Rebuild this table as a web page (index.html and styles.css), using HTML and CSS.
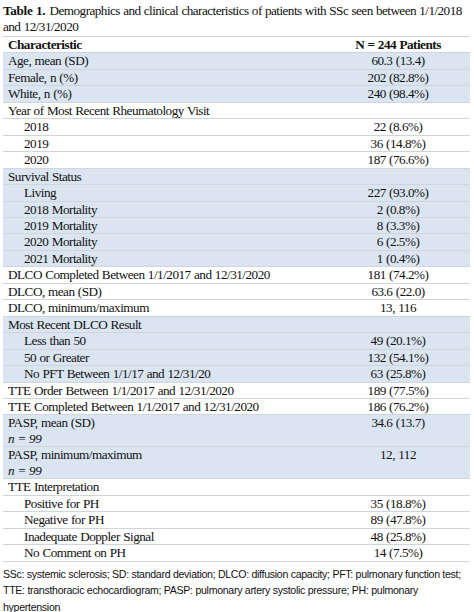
FILE: index.html
```html
<!DOCTYPE html>
<html>
<head>
<meta charset="utf-8">
<link rel="stylesheet" href="styles.css">
</head>
<body>
<div class="page">
  <p class="title"><b class="lead">Table 1.</b> Demographics and clinical characteristics of patients with SSc seen between 1/1/2018 and 12/31/2020</p>
  <table class="tbl">
    <tr class="head"><th class="c1">Characteristic</th><th class="c2">N = 244 Patients</th></tr>
    <tr class="blue"><td class="c1">Age, mean (SD)</td><td class="c2">60.3 (13.4)</td></tr>
    <tr class="blue"><td class="c1">Female, n (%)</td><td class="c2">202 (82.8%)</td></tr>
    <tr class="blue"><td class="c1">White, n (%)</td><td class="c2">240 (98.4%)</td></tr>
    <tr><td class="c1">Year of Most Recent Rheumatology Visit</td><td class="c2"></td></tr>
    <tr><td class="c1 ind">2018</td><td class="c2">22 (8.6%)</td></tr>
    <tr><td class="c1 ind">2019</td><td class="c2">36 (14.8%)</td></tr>
    <tr><td class="c1 ind">2020</td><td class="c2">187 (76.6%)</td></tr>
    <tr class="blue"><td class="c1">Survival Status</td><td class="c2"></td></tr>
    <tr class="blue"><td class="c1 ind">Living</td><td class="c2">227 (93.0%)</td></tr>
    <tr class="blue"><td class="c1 ind">2018 Mortality</td><td class="c2">2 (0.8%)</td></tr>
    <tr class="blue"><td class="c1 ind">2019 Mortality</td><td class="c2">8 (3.3%)</td></tr>
    <tr class="blue"><td class="c1 ind">2020 Mortality</td><td class="c2">6 (2.5%)</td></tr>
    <tr class="blue"><td class="c1 ind">2021 Mortality</td><td class="c2">1 (0.4%)</td></tr>
    <tr><td class="c1">DLCO Completed Between 1/1/2017 and 12/31/2020</td><td class="c2">181 (74.2%)</td></tr>
    <tr><td class="c1">DLCO, mean (SD)</td><td class="c2">63.6 (22.0)</td></tr>
    <tr><td class="c1">DLCO, minimum/maximum</td><td class="c2">13, 116</td></tr>
    <tr class="blue"><td class="c1">Most Recent DLCO Result</td><td class="c2"></td></tr>
    <tr class="blue"><td class="c1 ind">Less than 50</td><td class="c2">49 (20.1%)</td></tr>
    <tr class="blue"><td class="c1 ind">50 or Greater</td><td class="c2">132 (54.1%)</td></tr>
    <tr class="blue"><td class="c1 ind">No PFT Between 1/1/17 and 12/31/20</td><td class="c2">63 (25.8%)</td></tr>
    <tr><td class="c1">TTE Order Between 1/1/2017 and 12/31/2020</td><td class="c2">189 (77.5%)</td></tr>
    <tr><td class="c1">TTE Completed Between 1/1/2017 and 12/31/2020</td><td class="c2">186 (76.2%)</td></tr>
    <tr class="blue"><td class="c1">PASP, mean (SD)<br><i>n = 99</i></td><td class="c2">34.6 (13.7)</td></tr>
    <tr class="blue"><td class="c1">PASP, minimum/maximum<br><i>n = 99</i></td><td class="c2">12, 112</td></tr>
    <tr><td class="c1">TTE Interpretation</td><td class="c2"></td></tr>
    <tr><td class="c1 ind">Positive for PH</td><td class="c2">35 (18.8%)</td></tr>
    <tr><td class="c1 ind">Negative for PH</td><td class="c2">89 (47.8%)</td></tr>
    <tr><td class="c1 ind">Inadequate Doppler Signal</td><td class="c2">48 (25.8%)</td></tr>
    <tr><td class="c1 ind">No Comment on PH</td><td class="c2">14 (7.5%)</td></tr>
  </table>
  <p class="note">SSc: systemic sclerosis; SD: standard deviation; DLCO: diffusion capacity; PFT: pulmonary function test; TTE: transthoracic echocardiogram; PASP: pulmonary artery systolic pressure; PH: pulmonary hypertension</p>
</div>
</body>
</html>
```
FILE: styles.css
```css
html, body {
  margin: 0;
  padding: 0;
  background: #ffffff;
}
.page {
  width: 467px;
  padding: 0 4px 0 3px;
  font-family: "Liberation Serif", "Times New Roman", serif;
  color: #111;
}
.title {
  width: 471px;
  margin: 0;
  padding-top: 3px;
  font-size: 13.2px;
  letter-spacing: -0.55px;
  word-spacing: 0.5px;
  line-height: 16px;
  height: 33px;
}
.lead {
  letter-spacing: -0.3px;
  margin-right: 1px;
}
.tbl {
  width: 467px;
  border-collapse: collapse;
  font-size: 13.2px;
  letter-spacing: -0.5px;
  word-spacing: 0.5px;
  line-height: 15.45px;
  border-top: 1px solid #cfd5dc;
}
.tbl th, .tbl td {
  padding: 0;
  border-bottom: 1px solid #cfd5dc;
  vertical-align: top;
}
.tbl th {
  font-weight: bold;
}
.c1 {
  width: 302px;
  text-align: left;
  padding-left: 5px !important;
}
.c2 {
  text-align: center;
}
.ind {
  padding-left: 21px !important;
}
.blue td, .blue th {
  background: #dbe5f1;
}
.note {
  margin: 0;
  padding-top: 4px;
  font-family: "Liberation Sans", Arial, sans-serif;
  font-size: 10.6px;
  letter-spacing: -0.3px;
  line-height: 16.5px;
  color: #111;
}
```
